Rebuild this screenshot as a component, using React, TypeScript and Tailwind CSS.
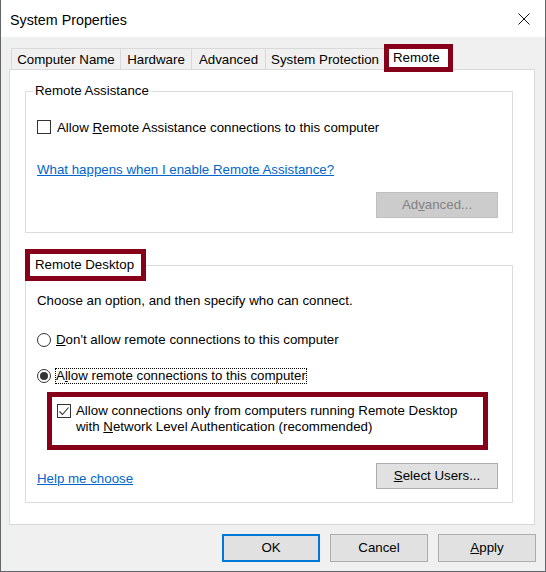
const tabs = [
  { label: "Computer Name", w: "w-[109px]" },
  { label: "Hardware", w: "w-[71px]" },
  { label: "Advanced", w: "w-[74px]" },
  { label: "System Protection", w: "w-[119px]" },
];

function CheckBox({ checked }: { checked?: boolean }) {
  return (
    <span className="mt-[1px] flex h-[14px] w-[14px] shrink-0 items-center justify-center border border-[#333333] bg-white">
      {checked && (
        <svg width="12" height="12" viewBox="0 0 12 12" fill="none">
          <path d="M1.5 6.5 L4.5 9.5 L10.5 2.5" stroke="#333333" strokeWidth="1.1" />
        </svg>
      )}
    </span>
  );
}

function Radio({ checked }: { checked?: boolean }) {
  return (
    <span className="mt-[1px] flex h-[14px] w-[14px] shrink-0 items-center justify-center rounded-full border border-[#333333] bg-white">
      {checked && <span className="h-[8px] w-[8px] rounded-full bg-[#333333]" />}
    </span>
  );
}

export default function App() {
  return (
    <div className="flex h-[572px] w-[546px] flex-col border-x border-b border-[#62666b] bg-[#f0f0f0] font-['Liberation_Sans',Arial,sans-serif] text-[13.3px] leading-[16px] text-black">
      {/* title bar */}
      <div className="flex h-[37px] shrink-0 items-start bg-white">
        <span className="pl-[9px] pt-[12px] text-[14.3px] leading-[17px]">System Properties</span>
        <svg className="ml-auto mr-[15px] mt-[13px]" width="12" height="12" viewBox="0 0 12 12">
          <path d="M0.5 0.5 L11.5 11.5 M11.5 0.5 L0.5 11.5" stroke="#111111" strokeWidth="1" />
        </svg>
      </div>

      {/* tabs */}
      <div className="ml-[10px] mt-[7px] flex items-start">
        {tabs.map((t) => (
          <div
            key={t.label}
            className={`mt-[4px] h-[21px] ${t.w} border-l border-t border-[#d9d9d9] pt-[2px] text-center leading-[18px]`}
          >
            {t.label}
          </div>
        ))}
        <div className="relative z-10 -mb-[3px] h-[28px] w-[69px] border-[5px] border-[#86001a] bg-white pl-[4px] pt-[1px] leading-[15px]">
          Remote
        </div>
      </div>

      {/* tab page */}
      <div className="ml-[8px] h-[456px] w-[526px] border border-[#d9d9d9] bg-white pl-[15px] pt-[21px]">
        <div className="relative w-[488px] border border-[#dcdcdc] pb-[14px] pl-[11px] pr-[14px] pt-[27px]">
          <span className="absolute -top-[9px] left-[7px] bg-white px-[2px]">Remote Assistance</span>
          <div className="flex items-start">
            <CheckBox />
            <span className="ml-[6px] mt-[1px]">
              Allow <u>R</u>emote Assistance connections to this computer
            </span>
          </div>
          <div className="mt-[26px] text-[#0066cc] underline">What happens when I enable Remote Assistance?</div>
          <div className="mt-[14px] flex justify-end">
            <div className="flex h-[26px] w-[122px] items-center justify-center border border-[#bfbfbf] bg-[#cccccc] text-[#838383]">
              <span>
                Ad<u>v</u>anced...
              </span>
            </div>
          </div>
        </div>

        <div className="relative mt-[32px] w-[488px] border border-[#dcdcdc] pb-[13px] pl-[11px] pr-[14px] pt-[27px]">
          <div className="absolute -left-[1px] -top-[17px] h-[32px] w-[121px] border-[5px] border-[#86001a] bg-white pl-[5px] leading-[22px]">
            Remote Desktop
          </div>
          <p>Choose an option, and then specify who can connect.</p>
          <div className="mt-[23px] flex items-start">
            <Radio />
            <span className="ml-[5px]">
              <u>D</u>on't allow remote connections to this computer
            </span>
          </div>
          <div className="mt-[20px] flex items-start">
            <Radio checked />
            <span className="ml-[4px] border border-dotted border-black leading-[14px]">
              A<u>l</u>low remote connections to this computer
            </span>
          </div>
          <div className="ml-[10px] mt-[8px] flex w-[441px] items-start border-[5px] border-[#86001a] pb-[10px] pl-[5px] pt-[6px]">
            <CheckBox checked />
            <span className="ml-[5px]">
              Allow connections only from computers running Remote Desktop
              <br />
              with <u>N</u>etwork Level Authentication (recommended)
            </span>
          </div>
          <div className="mt-[13px] flex items-start justify-between">
            <span className="mt-[8px] text-[#0066cc] underline">Help me choose</span>
            <div className="flex h-[26px] w-[122px] items-center justify-center border border-[#adadad] bg-[#e1e1e1]">
              <span>
                <u>S</u>elect Users...
              </span>
            </div>
          </div>
        </div>
      </div>

      {/* dialog buttons */}
      <div className="mt-[9px] flex justify-end gap-[10px] pr-[9px]">
        <div className="flex h-[28px] w-[98px] items-center justify-center border-2 border-[#0078d7] bg-[#e1e1e1]">OK</div>
        <div className="flex h-[28px] w-[98px] items-center justify-center border border-[#adadad] bg-[#e1e1e1]">Cancel</div>
        <div className="flex h-[28px] w-[98px] items-center justify-center border border-[#adadad] bg-[#e1e1e1]">
          <span>
            <u>A</u>pply
          </span>
        </div>
      </div>
    </div>
  );
}
